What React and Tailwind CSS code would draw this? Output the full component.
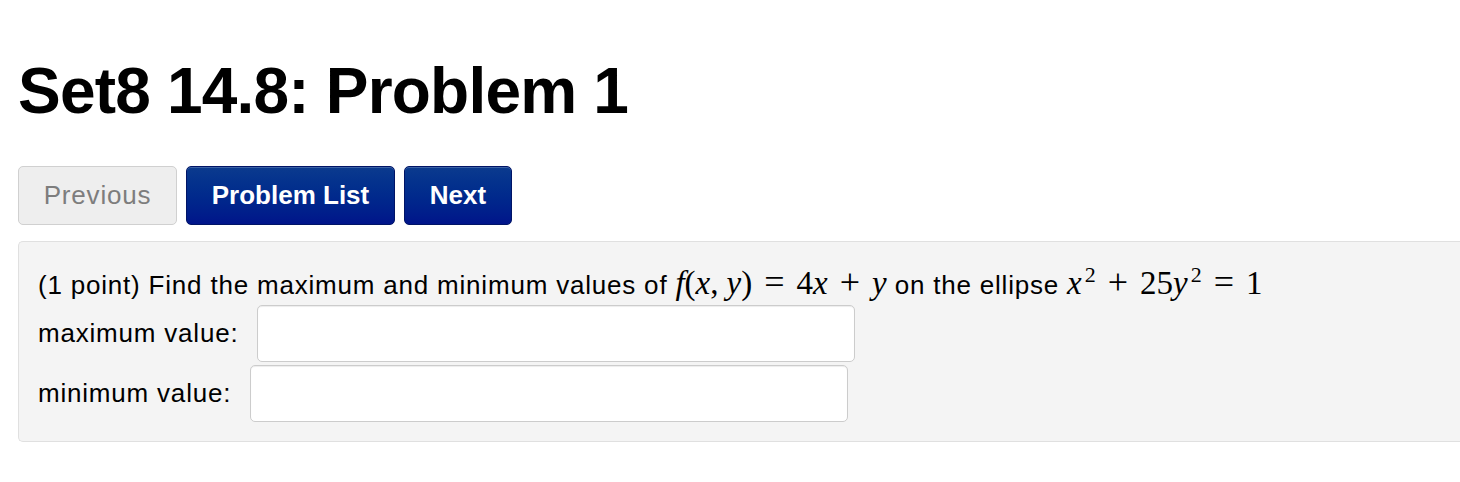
import React from "react";

function I({ children }) {
  return <i className="font-['Liberation_Serif',serif]">{children}</i>;
}
function Op({ children }) {
  return <span className="mx-[12px] text-[36px] leading-none">{children}</span>;
}
function Sup({ children }) {
  return <span className="relative top-[-12px] text-[22px] ml-[3px] leading-none">{children}</span>;
}

export default function App() {
  return (
    <div className="w-[1460px] h-[482px] bg-white font-['Liberation_Sans',Arial,sans-serif] text-black overflow-hidden">
      <div className="pl-[18px] pt-[58px]">
        <h1 className="text-[64px] font-bold leading-[66px] tracking-[-0.8px]">Set8 14.8: Problem 1</h1>
        <div className="mt-[42px] flex gap-[9px]">
          <button className="w-[159px] h-[59px] rounded-[5px] border border-[#d0d0d0] bg-[#eeeeee] text-[#7d7d7d] text-[26px] tracking-[0.8px]">
            Previous
          </button>
          <button className="w-[209px] h-[59px] rounded-[5px] border border-[#001466] bg-gradient-to-b from-[#0b3a8e] to-[#00148a] text-white text-[26px] font-bold shadow-[inset_0_1px_0_rgba(255,255,255,0.2)]">
            Problem List
          </button>
          <button className="w-[108px] h-[59px] rounded-[5px] border border-[#001466] bg-gradient-to-b from-[#0b3a8e] to-[#00148a] text-white text-[26px] font-bold shadow-[inset_0_1px_0_rgba(255,255,255,0.2)]">
            Next
          </button>
        </div>
        <div className="mt-[16px] h-[201px] rounded-l-[5px] border border-r-0 border-[#e0e0e0] bg-[#f4f4f4] pl-[19px] pt-[22px] text-[26px] tracking-[0.8px]">
          <div className="h-[40px] flex items-baseline whitespace-pre leading-[38px]">
            <span>(1 point) Find the maximum and minimum values of </span>
            <span className="font-['Liberation_Serif',serif] text-[33px] tracking-normal">
              <I>f</I>(<I>x</I>,<span className="inline-block w-[8px]" />
              <I>y</I>)<Op>=</Op>4<I>x</I>
              <Op>+</Op>
              <I>y</I>
            </span>
            <span> on the ellipse </span>
            <span className="font-['Liberation_Serif',serif] text-[33px] tracking-normal">
              <I>x</I>
              <Sup>2</Sup>
              <Op>+</Op>25<I>y</I>
              <Sup>2</Sup>
              <Op>=</Op>1
            </span>
          </div>
          <div className="mt-[1px] flex items-center gap-[19px]">
            <span>maximum value:</span>
            <div className="w-[598px] h-[57px] rounded-[5px] border border-[#cccccc] bg-white shadow-[inset_0_1px_1px_rgba(0,0,0,0.075)]" />
          </div>
          <div className="mt-[3px] flex items-center gap-[19px]">
            <span>minimum value:</span>
            <div className="w-[598px] h-[57px] rounded-[5px] border border-[#cccccc] bg-white shadow-[inset_0_1px_1px_rgba(0,0,0,0.075)]" />
          </div>
        </div>
      </div>
    </div>
  );
}
